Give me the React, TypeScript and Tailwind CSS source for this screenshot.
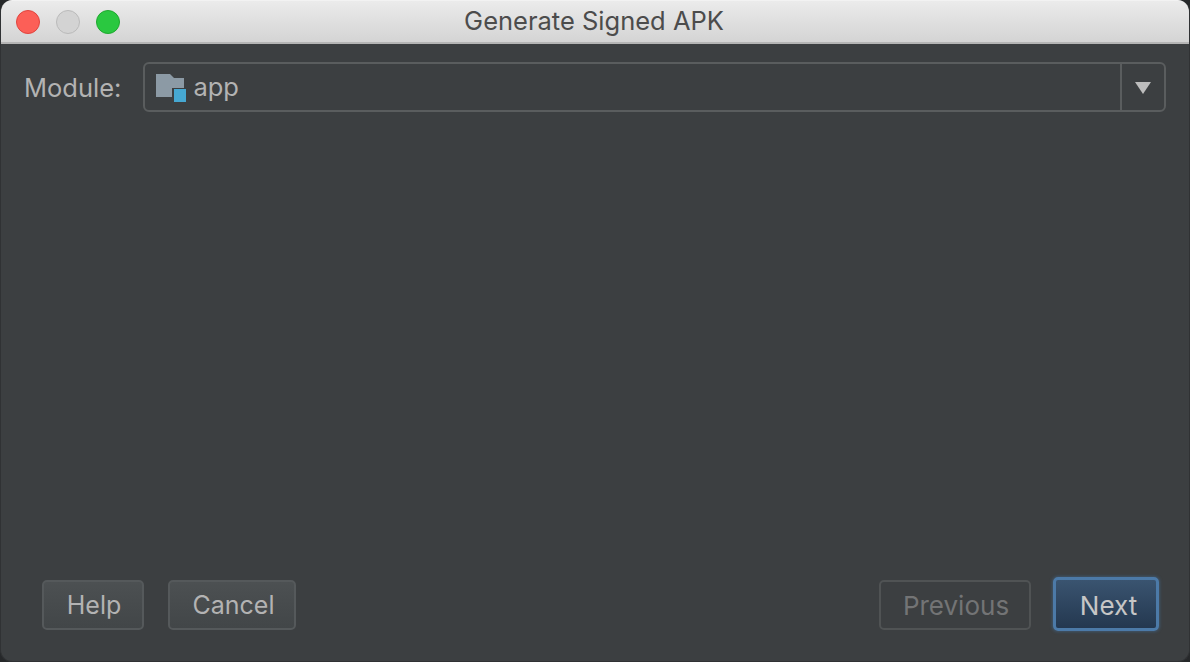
const sans = "font-['Inter','Liberation_Sans',sans-serif]";

function TrafficLight({ className }: { className: string }) {
  return <div className={`w-6 h-6 rounded-full border ${className}`} />;
}

function Button({ label, className }: { label: string; className: string }) {
  return (
    <div className={`flex items-center justify-center rounded-[5px] ${className}`}>
      {label}
    </div>
  );
}

export default function App() {
  return (
    <div className={`w-[1190px] h-[662px] bg-[#26282a] ${sans}`}>
      <div className="w-full h-full flex flex-col rounded-[12px] overflow-hidden bg-[#3c3f41] border-x border-b border-[#303234]">
        <div className="relative h-11 shrink-0 -mx-px flex items-center gap-4 pl-4 border-t border-t-[#f2f2f2] border-b-2 border-b-[#b5b5b5] bg-gradient-to-b from-[#ebebeb] to-[#d4d4d4]">
          <TrafficLight className="bg-[#fc5f57] border-[#e0443e]" />
          <TrafficLight className="bg-[#d3d3d3] border-[#bababa]" />
          <TrafficLight className="bg-[#2ac840] border-[#1fa82f]" />
          <div className="absolute inset-x-0 top-0 h-[41px] flex items-center justify-center text-[25.5px] text-[#4c4c4c] pr-[2px]">
            Generate Signed APK
          </div>
        </div>
        <div className="flex-1 flex flex-col pt-[18px] pl-[23px] pr-[23px] pb-[30px]">
          <div className="flex items-center gap-[22px]">
            <div className="text-[25.5px] text-[#b3b3b3] pt-[2px]">Module:</div>
            <div className="flex-1 h-[50px] flex items-center rounded-[6px] border-2 border-[#5a5d5e]">
              <div className="flex-1 flex items-center gap-[5px] pl-[11px]">
                <svg width="32" height="30" viewBox="0 0 32 30" className="mt-[2px]">
                  <path d="M0 1h14l4 4h10v10H16v9H0z" fill="#8c9aa5" />
                  <rect x="18" y="16" width="12" height="13" fill="#46a8d2" />
                </svg>
                <span className="text-[25.5px] text-[#b3b3b3] pt-[1px]">app</span>
              </div>
              <div className="w-[44px] h-full flex items-center justify-center border-l-2 border-[#5a5d5e]">
                <svg width="16" height="12" viewBox="0 0 16 12" className="mt-[1px] -ml-[1px]">
                  <path d="M0 0h16L8 12z" fill="#bdbdbd" />
                </svg>
              </div>
            </div>
          </div>
          <div className="flex-1" />
          <div className="flex items-center pl-[18px] pr-[7px]">
            <Button label="Help" className="w-[102px] h-[50px] mt-[2px] pt-[2px] pl-[2px] border-2 border-[#55595b] bg-gradient-to-b from-[#4c5052] to-[#424648] text-[#b3b3b3] text-[25px]" />
            <Button label="Cancel" className="w-[128px] h-[50px] mt-[2px] ml-[24px] pt-[2px] pl-[3px] border-2 border-[#55595b] bg-gradient-to-b from-[#4c5052] to-[#424648] text-[#b3b3b3] text-[25px]" />
            <div className="flex-1" />
            <Button label="Previous" className="w-[152px] h-[50px] mt-[2px] pt-[1px] pl-[2px] border-2 border-[#505354] text-[#737475] text-[26px]" />
            <Button label="Next" className="w-[106px] h-[54px] ml-[22px] pt-[2px] pl-[5px] border-[3px] border-[#4c7aa8] bg-gradient-to-b from-[#3a5470] to-[#243850] text-[#c6c6c6] text-[26px] shadow-[0_0_3px_1px_rgba(70,120,170,0.4)]" />
          </div>
        </div>
      </div>
    </div>
  );
}
